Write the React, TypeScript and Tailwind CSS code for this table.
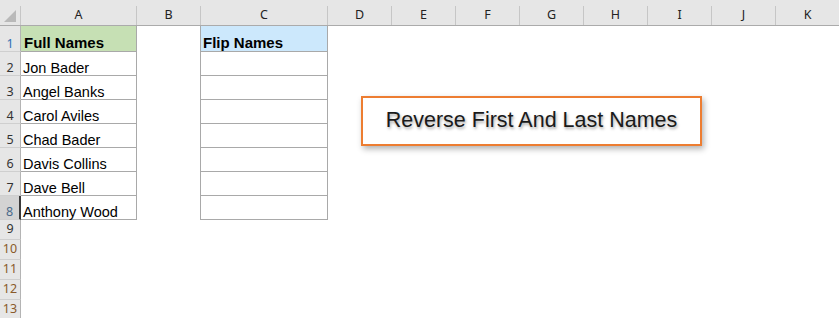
import React from 'react';

const COLS = ['D', 'E', 'F', 'G', 'H', 'I', 'J', 'K'];
const NAMES = ['Jon Bader', 'Angel Banks', 'Carol Aviles', 'Chad Bader', 'Davis Collins', 'Dave Bell', 'Anthony Wood'];

const hdrFont = { fontFamily: '"Noto Sans", "Open Sans", sans-serif' };
const cellFont = { fontFamily: '"Liberation Sans", Arial, sans-serif' };

const ColHeader: React.FC<{ label: string; width: string }> = ({ label, width }) => (
  <div className={`${width} shrink-0 h-full pt-[6px]`}>
    <div className="h-full border-r border-[#c6c6c6] flex items-center justify-center text-[12.5px] text-[#222]">
      {label}
    </div>
  </div>
);

const RowHeader: React.FC<{ n: number; selected?: boolean; color?: string; center?: boolean }> = ({ n, selected, color, center }) => (
  <div
    className={`w-[21px] shrink-0 h-full flex justify-center text-[12.5px] leading-none border-b border-[#cfcfcf] ${
      center ? 'items-center' : 'items-end pb-[1px]'
    } ${selected ? 'bg-[#d3d3d3] border-r-2 border-r-[#3a3a3a]' : 'bg-[#e6e6e6] border-r border-r-[#b4b4b4]'}`}
    style={{ ...hdrFont, color: color ?? '#333' }}
  >
    {n}
  </div>
);

export default function App() {
  return (
    <div className="relative w-[839px] h-[318px] overflow-hidden bg-white select-none">
      {/* column headers */}
      <div className="flex h-[26px] bg-[#e6e6e6] border-b border-[#ababab]" style={hdrFont}>
        <div className="w-[21px] shrink-0 h-full pt-[6px]">
          <div className="h-full border-r border-[#c6c6c6] relative">
            <svg width="13" height="12" viewBox="0 0 13 12" className="absolute left-[4px] top-[4px]">
              <polygon points="12,0 12,12 0,12" fill="#b9b9b9" />
            </svg>
          </div>
        </div>
        <ColHeader label="A" width="w-[116px]" />
        <ColHeader label="B" width="w-[64px]" />
        <ColHeader label="C" width="w-[127px]" />
        {COLS.map(c => (
          <ColHeader key={c} label={c} width="w-[64px]" />
        ))}
      </div>

      {/* row 1 */}
      <div className="flex h-[26px]" style={cellFont}>
        <RowHeader n={1} color="#2f6fb4" />
        <div className="w-[116px] shrink-0 h-full bg-[#c6e0b4] border-r border-b border-[#a9a9a9] flex items-end pl-[3px] pb-[1px] text-[15px] leading-none font-bold text-black">
          Full Names
        </div>
        <div className="w-[63px] shrink-0" />
        <div className="w-[128px] shrink-0 h-full bg-[#cce8fc] border-x border-b border-[#a9a9a9] flex items-end pl-[2px] pb-[1px] text-[15px] leading-none font-bold text-black">
          Flip Names
        </div>
      </div>

      {/* rows 2-8 */}
      {NAMES.map((name, i) => (
        <div key={name} className="flex h-[24px]" style={cellFont}>
          <RowHeader n={i + 2} selected={i === NAMES.length - 1} color={i === NAMES.length - 1 ? '#4a6a8a' : '#333'} />
          <div className="w-[116px] shrink-0 h-full border-r border-b border-[#a9a9a9] flex items-end pl-[2px] text-[14.5px] leading-none text-black">
            {name}
          </div>
          <div className="w-[63px] shrink-0" />
          <div className="w-[128px] shrink-0 h-full border-x border-b border-[#a9a9a9]" />
        </div>
      ))}

      {/* empty rows */}
      {[9, 10, 11, 12, 13].map(n => (
        <div key={n} className="flex h-[20px]">
          <RowHeader n={n} center color={n === 9 ? '#333' : '#8a5a2a'} />
        </div>
      ))}

      {/* callout box */}
      <div
        className="absolute left-[361px] top-[96px] w-[341px] h-[50px] border-2 border-[#ed7d31] bg-white shadow-[2px_3px_6px_rgba(0,0,0,0.3)] flex items-center justify-center pb-[2px] text-[21.5px] text-[#1a1a1a]"
        style={{ ...cellFont, textShadow: '1px 2px 3px rgba(0,0,0,0.35)' }}
      >
        Reverse First And Last Names
      </div>
    </div>
  );
}
